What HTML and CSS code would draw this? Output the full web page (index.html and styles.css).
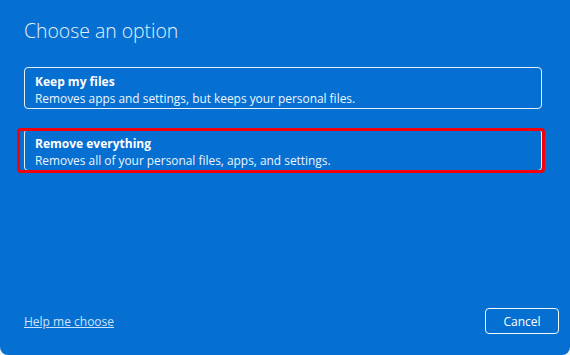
FILE: index.html
```html
<!DOCTYPE html>
<html lang="en">
<head>
  <meta charset="UTF-8" />
  <meta name="viewport" content="width=device-width, initial-scale=1" />
  <title>Choose an option</title>
  <link rel="stylesheet" href="styles.css">
</head>
<body>
  <div class="panel">
    <h1 class="title">Choose an option</h1>

    <!-- Opciones de restablecimiento -->
    <div class="options">
      <button class="option">
        <span class="option-name">Keep my files</span>
        <span class="option-desc">Removes apps and settings, but keeps your personal files.</span>
      </button>
      <button class="option option-marked">
        <span class="option-name">Remove everything</span>
        <span class="option-desc">Removes all of your personal files, apps, and settings.</span>
      </button>
    </div>

    <!-- Pie: ayuda + cancelar -->
    <div class="footer">
      <a class="help-link" href="#">Help me choose</a>
      <button class="btn-cancel">Cancel</button>
    </div>
  </div>
</body>
</html>
```

FILE: styles.css
```css
/* ===== General ===== */
body {
  margin: 0;
  background-color: #f3f3f3;
  font-family: "Open Sans", "Noto Sans", sans-serif;
  color: #fff;
}
.panel {
  height: 355px;
  box-sizing: border-box;
  background-color: #0670d2;
  border-radius: 0 0 8px 8px;
  padding: 17px 0 0 24px;
  display: flex;
  flex-direction: column;
}
.title {
  margin: 0;
  font-size: 19.4px;
  font-weight: 300;
  line-height: 28px;
  color: #e8f1fb;
}

/* ===== Options ===== */
.options {
  margin-top: 22px;
  width: 518px;
  display: flex;
  flex-direction: column;
  gap: 20px;
}
.option {
  position: relative;
  display: flex;
  flex-direction: column;
  align-items: flex-start;
  height: 42px;
  box-sizing: border-box;
  padding: 5px 10px 0;
  background: transparent;
  border: 1.5px solid rgba(255,255,255,0.9);
  border-radius: 4px;
  font-family: inherit;
  color: #fff;
  text-align: left;
  cursor: pointer;
}
.option-name {
  font-size: 12px;
  font-weight: 700;
  line-height: 17px;
}
.option-desc {
  font-size: 11.9px;
  line-height: 17px;
  color: #eef5fd;
}
.option-marked::after {
  content: "";
  position: absolute;
  top: -2px;
  bottom: -3px;
  left: -8px;
  right: -4px;
  border: 3px solid #f2000c;
  border-radius: 4px;
}

/* ===== Footer ===== */
.footer {
  margin-top: auto;
  display: flex;
  justify-content: space-between;
  align-items: center;
  padding: 0 11px 21px 0;
}
.help-link {
  font-size: 12px;
  color: #cbe2fb;
}
.btn-cancel {
  width: 74px;
  height: 26px;
  background: transparent;
  border: 1.5px solid rgba(255,255,255,0.95);
  border-radius: 4px;
  font-family: inherit;
  font-size: 12px;
  color: #fff;
  cursor: pointer;
}
```
